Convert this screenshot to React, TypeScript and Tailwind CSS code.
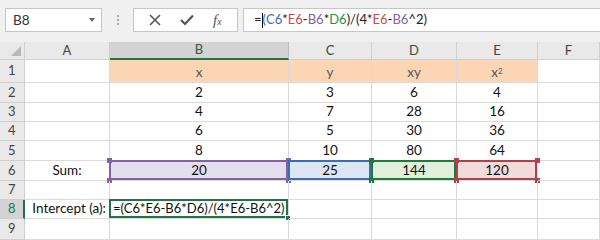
import React from 'react';

const cols = ['A', 'B', 'C', 'D', 'E', 'F'];
const rowHeights = [23, 20, 19, 19, 20, 20, 19, 19, 21];

type Cell = { text?: React.ReactNode };

const data: Cell[][] = [
  [{}, { text: 'x' }, { text: 'y' }, { text: 'xy' }, { text: <span>x<sup className="text-[8px] relative -top-[3px]">2</sup></span> }, {}],
  [{}, { text: '2' }, { text: '3' }, { text: '6' }, { text: '4' }, {}],
  [{}, { text: '4' }, { text: '7' }, { text: '28' }, { text: '16' }, {}],
  [{}, { text: '6' }, { text: '5' }, { text: '30' }, { text: '36' }, {}],
  [{}, { text: '8' }, { text: '10' }, { text: '80' }, { text: '64' }, {}],
  [{ text: 'Sum:' }, { text: '20' }, { text: '25' }, { text: '144' }, { text: '120' }, {}],
  [{}, {}, {}, {}, {}, {}],
  [{ text: 'Intercept (a):' }, {}, {}, {}, {}, {}],
  [{}, {}, {}, {}, {}, {}],
];

const sumBoxes: Record<number, { fill: string; border: string; handle: string; handles: boolean }> = {
  1: { fill: 'bg-[#e4dfec]', border: 'border-[#8064a2]', handle: 'bg-[#8064a2]', handles: true },
  2: { fill: 'bg-[#dde7f4]', border: 'border-[#3e6cb2]', handle: 'bg-[#3e6cb2]', handles: false },
  3: { fill: 'bg-[#e2efda]', border: 'border-[#217a3a]', handle: 'bg-[#217a3a]', handles: true },
  4: { fill: 'bg-[#f2dcdb]', border: 'border-[#b0404a]', handle: 'bg-[#b0404a]', handles: true },
};

export default function App() {
  return (
    <div className="w-[600px] h-[240px] overflow-hidden bg-white text-[#111] font-['Lato','Liberation_Sans',sans-serif] text-[13.5px]">
      {/* formula bar */}
      <div className="h-[42px] bg-[#f0f0f0] flex items-start pt-[8px] pl-[5px]">
        <div className="w-[97px] h-[24px] bg-white border border-[#c6c6c6] flex items-center justify-between pl-[7px] pr-[6px]">
          <span className="text-[#333]">B8</span>
          <span className="w-0 h-0 border-l-[3.5px] border-r-[3.5px] border-t-[4px] border-l-transparent border-r-transparent border-t-[#666]" />
        </div>
        <div className="w-[31px] h-[24px] flex flex-col items-center justify-center gap-[2px]">
          <span className="w-[2px] h-[2px] bg-[#aaa]" />
          <span className="w-[2px] h-[2px] bg-[#aaa]" />
          <span className="w-[2px] h-[2px] bg-[#aaa]" />
        </div>
        <div className="w-[105px] h-[24px] bg-white border border-[#c6c6c6] flex items-center justify-around px-[6px]">
          <svg width="12" height="12" viewBox="0 0 12 12">
            <path d="M1 1 L11 11 M11 1 L1 11" stroke="#555" strokeWidth="1.6" />
          </svg>
          <svg width="14" height="12" viewBox="0 0 14 12">
            <path d="M1 6 L5 10 L13 1.5" stroke="#555" strokeWidth="2.2" fill="none" />
          </svg>
          <span className="font-['Liberation_Serif',serif] italic text-[#555] text-[15px] leading-none">
            f<span className="text-[10px]">x</span>
          </span>
        </div>
        <div className="ml-[5px] flex-1 h-[24px] bg-white border border-r-0 border-[#c6c6c6] flex items-center pl-[10px] text-[13px] text-[#222]">
          <span>=</span>
          <span className="w-px h-[15px] bg-black" />
          <span className="text-[#3e6cb2]">(</span>
          <span className="text-[#3e6cb2]">C6</span>
          <span>*</span>
          <span className="text-[#c0504d]">E6</span>
          <span>-</span>
          <span className="text-[#8064a2]">B6</span>
          <span>*</span>
          <span className="text-[#2e8b3a]">D6</span>
          <span className="whitespace-pre">)/(4*</span>
          <span className="text-[#c0504d]">E6</span>
          <span>-</span>
          <span className="text-[#8064a2]">B6</span>
          <span>^2)</span>
        </div>
      </div>

      {/* sheet */}
      <div className="grid grid-cols-[25px_85px_179px_83px_85px_81px_1fr]">
        <div className="h-[18px] bg-[#e9e9e9] border-r border-b border-[#cfcfcf] flex items-end justify-end pr-[3px] pb-[3px]">
          <svg width="10" height="10" viewBox="0 0 10 10">
            <polygon points="10,0 10,10 0,10" fill="#b8b8b8" />
          </svg>
        </div>
        {cols.map((c) =>
          c === 'B' ? (
            <div key={c} className="h-[18px] bg-[#d3d3d3] border-r border-[#bdbdbd] border-b-2 border-b-[#217346] flex items-center justify-center text-[13px] text-[#2b5f3f]">
              {c}
            </div>
          ) : (
            <div key={c} className="h-[18px] bg-[#e9e9e9] border-r border-b border-[#cfcfcf] flex items-center justify-center text-[13px] text-[#444]">
              {c}
            </div>
          )
        )}

        {data.map((row, r) => (
          <React.Fragment key={r}>
            <div
              style={{ height: rowHeights[r] }}
              className={
                r === 7
                  ? 'bg-[#d3d3d3] border-b border-[#cfcfcf] border-r-2 border-r-[#217346] flex items-center pl-[8px] text-[13px] text-[#217346]'
                  : 'bg-[#e9e9e9] border-r border-b border-[#cfcfcf] flex items-center pl-[8px] text-[13px] text-[#444]'
              }
            >
              {r + 1}
            </div>
            {row.map((cell, c) => {
              const base = 'relative border-r border-b border-[#dadada] flex items-end justify-center leading-none pb-[3px]';
              const fill = r === 0 && c >= 1 && c <= 4 ? 'bg-[#fcd5b4] text-[#555]' : '';
              const sum = r === 5 ? sumBoxes[c] : undefined;
              return (
                <div key={c} style={{ height: rowHeights[r] }} className={`${base} ${fill} ${sum ? sum.fill : ''}`}>
                  {r === 7 && c === 1 ? (
                    <span className="w-full pl-[3px] whitespace-nowrap text-[13px]">=(C6*E6-B6*D6)/(4*E6-B6^2)</span>
                  ) : r === 7 && c === 0 ? (
                    <span className="w-full text-right pr-[3px] whitespace-nowrap">{cell.text}</span>
                  ) : (
                    <span>{cell.text}</span>
                  )}
                  {sum && (
                    <>
                      <span className={`absolute -left-[1px] -top-[1px] right-0 bottom-0 border-2 ${sum.border}`} />
                      {sum.handles && (
                        <>
                          <span className={`absolute -left-[3px] -top-[3px] w-[5px] h-[5px] ${sum.handle}`} />
                          <span className={`absolute -right-[3px] -top-[3px] w-[5px] h-[5px] ${sum.handle}`} />
                          <span className={`absolute -left-[3px] -bottom-[3px] w-[5px] h-[5px] ${sum.handle}`} />
                          <span className={`absolute -right-[3px] -bottom-[3px] w-[5px] h-[5px] ${sum.handle}`} />
                        </>
                      )}
                    </>
                  )}
                  {r === 7 && c === 1 && (
                    <>
                      <span className="absolute -left-[1px] -top-[1px] right-0 bottom-0 border-2 border-[#217346]" />
                      <span className="absolute -right-[3px] -bottom-[3px] w-[6px] h-[6px] bg-[#217346] border border-white" />
                    </>
                  )}
                </div>
              );
            })}
          </React.Fragment>
        ))}
      </div>
    </div>
  );
}
